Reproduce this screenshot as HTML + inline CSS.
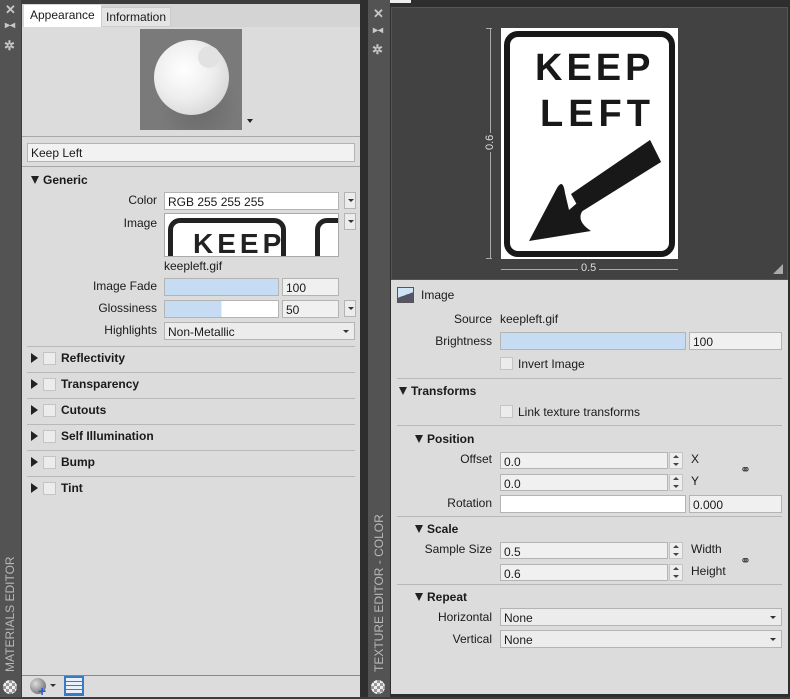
<!DOCTYPE html>
<html><head><meta charset="utf-8"><style>
*{box-sizing:border-box;margin:0;padding:0}
body{width:790px;height:697px;background:#3c3c3c;font-family:"Liberation Sans",sans-serif;font-size:12px;color:#1a1a1a;position:relative;overflow:hidden}
.a{position:absolute}
.strip{background:#535353}
.lp{background:#dcdcdc}
.lbl{position:absolute;text-align:right;white-space:nowrap}
.f{position:absolute;border:1px solid #b4b4b4;background:#f0f0f0;padding-left:3px;padding-top:1px;line-height:16px;white-space:nowrap}
.w{background:#fff}
.sl{position:absolute;border:1px solid #b4b4b4;background:#c5dcf2}
.sep{position:absolute;height:1px;background:#b8b8b8}
.btn{position:absolute;width:12px;height:17px;border:1px solid #b4b4b4;background:#ececec}
.btn:after{content:"";position:absolute;left:3px;top:6px;border:3px solid transparent;border-top:3px solid #333}
.h{position:absolute;font-weight:bold;white-space:nowrap}
.tri{display:inline-block;width:0;height:0;border-left:4.5px solid transparent;border-right:4.5px solid transparent;border-top:8px solid #222;margin-right:4px;vertical-align:0}
.trr{position:absolute;width:0;height:0;border-top:5px solid transparent;border-bottom:5px solid transparent;border-left:7px solid #222}
.cb{position:absolute;width:13px;height:13px;border:1px solid #c4c4c4;background:#ececec}
.spin{position:absolute;width:14px;height:17px;border:1px solid #c4c4c4;background:#eee}
.spin:before{content:"";position:absolute;left:3px;top:2px;border:3px solid transparent;border-bottom:3px solid #444;border-top:0}
.spin:after{content:"";position:absolute;left:3px;top:10px;border:3px solid transparent;border-top:3px solid #444;border-bottom:0}
.sel:after{content:"";position:absolute;right:5px;top:7px;border:3px solid transparent;border-top:3px solid #333}
.ic{position:absolute;color:#c8c8c8;font-size:13px;font-weight:bold}
.vt{position:absolute;color:#b8b8b8;font-size:12px;transform:rotate(-90deg);transform-origin:left top;white-space:nowrap}
</style></head><body>
<div class="a strip" style="left:0;top:0;width:21px;height:697px"></div>
<div class="ic" style="left:5px;top:2px">✕</div>
<div class="ic" style="left:5px;top:20px;font-size:10px">▸◂</div>
<div class="ic" style="left:4px;top:38px">✲</div>
<div class="vt" style="left:3px;top:672px">MATERIALS EDITOR</div>
<div class="a" style="left:3px;top:680px;width:14px;height:14px;border-radius:50%;background:repeating-conic-gradient(#eee 0 25%,#999 0 50%) 0 0/6px 6px"></div>
<div class="a lp" style="left:22px;top:4px;width:338px;height:693px"></div>
<div class="a" style="left:22px;top:4px;width:338px;height:23px;background:#d4d4d4"></div>
<div class="a" style="left:24px;top:5px;width:77px;height:22px;background:#fff;padding:3px 6px">Appearance</div>
<div class="a" style="left:101px;top:7px;width:70px;height:20px;background:#e4e4e4;border:1px solid #ccc;padding:2px 4px">Information</div>
<div class="a" style="left:140px;top:29px;width:102px;height:101px;background:radial-gradient(circle at 58% 78%,#6a6a6a 0,#7a7a7a 40%)"></div>
<div class="a" style="left:154px;top:40px;width:75px;height:75px;border-radius:50%;background:radial-gradient(circle at 40% 40%,#fff 0,#eee 45%,#c8c8c8 100%)"></div>
<div class="a" style="left:198px;top:46px;width:22px;height:22px;border-radius:50%;background:#e2e2e2"></div>
<div class="a" style="left:247px;top:119px;border:3px solid transparent;border-top:4px solid #222"></div>
<div class="sep" style="left:22px;top:136px;width:338px;background:#a8a8a8"></div>
<div class="f" style="left:27px;top:143px;width:328px;height:19px;background:#f2f2f2">Keep Left</div>
<div class="sep" style="left:22px;top:166px;width:338px;background:#a8a8a8"></div>
<div class="h" style="left:31px;top:173px"><span class="tri"></span>Generic</div>
<div class="lbl" style="right:633px;top:193px">Color</div>
<div class="f w" style="left:164px;top:192px;width:175px;height:18px">RGB 255 255 255</div>
<div class="btn" style="left:344px;top:192px"></div>
<div class="lbl" style="right:633px;top:216px">Image</div>
<div class="a" style="left:164px;top:213px;width:175px;height:44px;background:#fff;overflow:hidden;border:1px solid #aaa">
<div class="a" style="left:3px;top:4px;width:118px;height:60px;border:5px solid #222;border-radius:12px"></div>
<div class="a" style="left:28px;top:14px;font-size:28px;font-weight:bold;letter-spacing:4px;color:#222">KEEP</div>
<div class="a" style="left:150px;top:4px;width:40px;height:60px;border:5px solid #222;border-radius:12px"></div></div>
<div class="btn" style="left:344px;top:213px"></div>
<div class="a" style="left:164px;top:259px">keepleft.gif</div>
<div class="lbl" style="right:633px;top:279px">Image Fade</div>
<div class="sl" style="left:164px;top:278px;width:115px;height:18px"></div>
<div class="f" style="left:282px;top:278px;width:57px;height:18px">100</div>
<div class="lbl" style="right:633px;top:301px">Glossiness</div>
<div class="sl" style="left:164px;top:300px;width:115px;height:18px;background:linear-gradient(90deg,#c5dcf2 50%,#fff 50%)"></div>
<div class="f" style="left:282px;top:300px;width:57px;height:18px">50</div>
<div class="btn" style="left:344px;top:300px"></div>
<div class="lbl" style="right:633px;top:323px">Highlights</div>
<div class="f sel" style="left:164px;top:322px;width:191px;height:18px;background:#ececec">Non-Metallic</div>
<div class="sep" style="left:27px;top:346px;width:328px"></div>
<div class="trr" style="left:31px;top:353px"></div><div class="cb" style="left:43px;top:352px"></div><div class="h" style="left:61px;top:351px">Reflectivity</div>
<div class="sep" style="left:27px;top:372px;width:328px"></div>
<div class="trr" style="left:31px;top:379px"></div><div class="cb" style="left:43px;top:378px"></div><div class="h" style="left:61px;top:377px">Transparency</div>
<div class="sep" style="left:27px;top:398px;width:328px"></div>
<div class="trr" style="left:31px;top:405px"></div><div class="cb" style="left:43px;top:404px"></div><div class="h" style="left:61px;top:403px">Cutouts</div>
<div class="sep" style="left:27px;top:424px;width:328px"></div>
<div class="trr" style="left:31px;top:431px"></div><div class="cb" style="left:43px;top:430px"></div><div class="h" style="left:61px;top:429px">Self Illumination</div>
<div class="sep" style="left:27px;top:450px;width:328px"></div>
<div class="trr" style="left:31px;top:457px"></div><div class="cb" style="left:43px;top:456px"></div><div class="h" style="left:61px;top:455px">Bump</div>
<div class="sep" style="left:27px;top:476px;width:328px"></div>
<div class="trr" style="left:31px;top:483px"></div><div class="cb" style="left:43px;top:482px"></div><div class="h" style="left:61px;top:481px">Tint</div>
<div class="sep" style="left:22px;top:675px;width:338px;background:#888"></div>
<div class="a" style="left:30px;top:678px;width:16px;height:16px;border-radius:50%;background:radial-gradient(circle at 35% 35%,#ddd,#555)"></div>
<div class="a" style="left:38px;top:686px;color:#2a5bd8;font-weight:bold;font-size:14px;line-height:10px">+</div>
<div class="a" style="left:50px;top:684px;border:3px solid transparent;border-top:3px solid #333"></div>
<div class="a" style="left:64px;top:676px;width:20px;height:20px;border:2px solid #3a78c8;background:repeating-linear-gradient(#e8f0fa 0 3px,#3a78c8 3px 4px)"></div>
<div class="a" style="left:360px;top:0;width:8px;height:697px;background:#2e2e2e"></div>
<div class="a strip" style="left:368px;top:0;width:22px;height:697px"></div>
<div class="ic" style="left:373px;top:6px">✕</div>
<div class="ic" style="left:373px;top:25px;font-size:10px">▸◂</div>
<div class="ic" style="left:372px;top:42px">✲</div>
<div class="vt" style="left:372px;top:672px">TEXTURE EDITOR - COLOR</div>
<div class="a" style="left:371px;top:680px;width:14px;height:14px;border-radius:50%;background:repeating-conic-gradient(#eee 0 25%,#999 0 50%) 0 0/6px 6px"></div>
<div class="a" style="left:390px;top:0;width:400px;height:697px;background:#2e2e2e"></div>
<div class="a" style="left:390px;top:0;width:21px;height:3px;background:#eee"></div>
<div class="a" style="left:391px;top:7px;width:397px;height:273px;background:#424242;border:1px solid #555"></div>
<div class="a" style="left:501px;top:28px;width:177px;height:231px;background:#fff"></div>
<div class="a" style="left:504px;top:31px;width:171px;height:226px;border:6px solid #181818;border-radius:14px"></div>
<div class="a" style="left:535px;top:47px;font-size:38px;font-weight:bold;letter-spacing:4px;color:#181818;line-height:42px">KEEP</div>
<div class="a" style="left:540px;top:93px;font-size:38px;font-weight:bold;letter-spacing:5px;color:#181818;line-height:42px">LEFT</div>
<svg class="a" style="left:501px;top:28px" width="177" height="231"><path d="M149 112 L160 134 L88 176 Q70 190 90 203 L28 213 L56 160 Q62 150 64 165 L68 182 Z" fill="#181818"/><path d="M149 112 L160 134 L80 184 L70 166 Z" fill="#181818"/></svg>
<div class="a" style="left:490px;top:28px;width:1px;height:231px;background:#aaa"></div>
<div class="a" style="left:486px;top:28px;width:6px;height:1px;background:#aaa"></div>
<div class="a" style="left:486px;top:258px;width:6px;height:1px;background:#aaa"></div>
<div class="a" style="left:484px;top:152px;color:#ddd;font-size:11px;transform:rotate(-90deg);transform-origin:left top;background:#424242;padding:0 2px">0.6</div>
<div class="a" style="left:501px;top:269px;width:177px;height:1px;background:#aaa"></div>
<div class="a" style="left:578px;top:262px;color:#ddd;font-size:11px;background:#424242;padding:0 3px">0.5</div>
<div class="a" style="left:773px;top:264px;border-left:10px solid transparent;border-bottom:10px solid #aaa"></div>
<div class="a lp" style="left:391px;top:280px;width:397px;height:414px"></div>
<div class="a" style="left:397px;top:287px;width:17px;height:16px;border:1px solid #555;background:linear-gradient(160deg,#cfe4f5 50%,#556 50%)"></div>
<div class="a" style="left:421px;top:288px">Image</div>
<div class="lbl" style="right:298px;top:312px">Source</div>
<div class="a" style="left:500px;top:312px">keepleft.gif</div>
<div class="lbl" style="right:298px;top:334px">Brightness</div>
<div class="sl" style="left:500px;top:332px;width:186px;height:18px"></div>
<div class="f" style="left:689px;top:332px;width:93px;height:18px">100</div>
<div class="cb" style="left:500px;top:357px"></div><div class="a" style="left:518px;top:357px">Invert Image</div>
<div class="sep" style="left:397px;top:378px;width:385px"></div>
<div class="h" style="left:399px;top:384px"><span class="tri"></span>Transforms</div>
<div class="cb" style="left:500px;top:405px"></div><div class="a" style="left:518px;top:405px">Link texture transforms</div>
<div class="sep" style="left:397px;top:425px;width:385px"></div>
<div class="h" style="left:415px;top:432px"><span class="tri"></span>Position</div>
<div class="lbl" style="right:298px;top:452px">Offset</div>
<div class="f" style="left:500px;top:452px;width:168px;height:17px">0.0</div><div class="spin" style="left:669px;top:452px"></div><div class="a" style="left:691px;top:452px">X</div>
<div class="f" style="left:500px;top:474px;width:168px;height:17px">0.0</div><div class="spin" style="left:669px;top:474px"></div><div class="a" style="left:691px;top:474px">Y</div>
<div class="a" style="left:740px;top:462px;font-size:13px;color:#333">⚭</div>
<div class="lbl" style="right:298px;top:496px">Rotation</div>
<div class="f w" style="left:500px;top:495px;width:186px;height:18px"></div>
<div class="f" style="left:689px;top:495px;width:93px;height:18px">0.000</div>
<div class="sep" style="left:397px;top:516px;width:385px"></div>
<div class="h" style="left:415px;top:522px"><span class="tri"></span>Scale</div>
<div class="lbl" style="right:298px;top:542px">Sample Size</div>
<div class="f" style="left:500px;top:542px;width:168px;height:17px">0.5</div><div class="spin" style="left:669px;top:542px"></div><div class="a" style="left:691px;top:542px">Width</div>
<div class="f" style="left:500px;top:564px;width:168px;height:17px">0.6</div><div class="spin" style="left:669px;top:564px"></div><div class="a" style="left:691px;top:564px">Height</div>
<div class="a" style="left:740px;top:553px;font-size:13px;color:#333">⚭</div>
<div class="sep" style="left:397px;top:584px;width:385px"></div>
<div class="h" style="left:415px;top:590px"><span class="tri"></span>Repeat</div>
<div class="lbl" style="right:298px;top:610px">Horizontal</div>
<div class="f sel" style="left:500px;top:608px;width:282px;height:18px;background:#ececec">None</div>
<div class="lbl" style="right:298px;top:632px">Vertical</div>
<div class="f sel" style="left:500px;top:630px;width:282px;height:18px;background:#ececec">None</div>
</body></html>
